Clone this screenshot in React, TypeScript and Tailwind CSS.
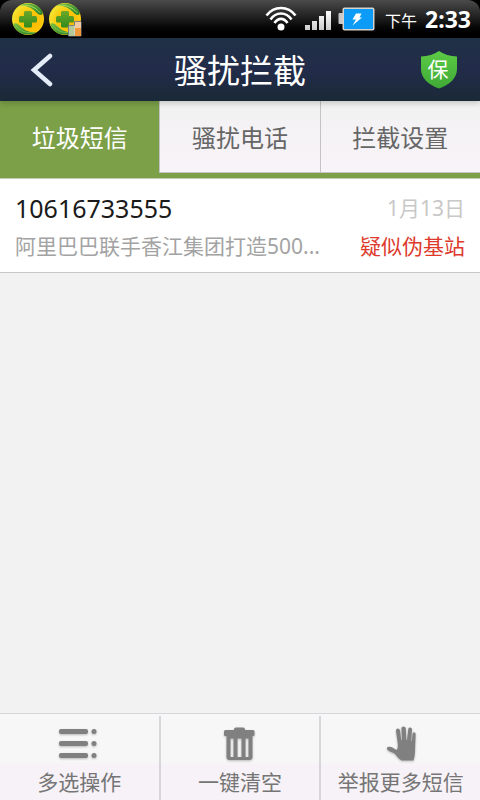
import type { ReactNode } from "react";

const tabs = ["垃圾短信", "骚扰电话", "拦截设置"];

const messages = [
  {
    sender: "10616733555",
    date: "1月13日",
    preview: "阿里巴巴联手香江集团打造500...",
    tag: "疑似伪基站",
  },
];

function ShieldOrb({ id, badge }: { id: string; badge?: boolean }) {
  return (
    <svg viewBox="0 0 36 36" className="h-9 w-9" aria-hidden="true">
      <defs>
        <radialGradient id={`${id}-orb`} cx="0.6" cy="0.6" r="0.6">
          <stop offset="0" stopColor="#ffb800" />
          <stop offset="0.55" stopColor="#fcc60a" />
          <stop offset="1" stopColor="#f3e22e" />
        </radialGradient>
        <linearGradient id={`${id}-leaf`} x1="0" y1="0" x2="1" y2="1">
          <stop offset="0" stopColor="#7cc142" />
          <stop offset="1" stopColor="#1d7a2a" />
        </linearGradient>
        <linearGradient id={`${id}-cross`} x1="0" y1="0" x2="0" y2="1">
          <stop offset="0" stopColor="#6fa82a" />
          <stop offset="1" stopColor="#2f8a1c" />
        </linearGradient>
      </defs>
      <circle cx="18" cy="18" r="16" fill={`url(#${id}-orb)`} />
      <path
        d="M10 4.500C16 1 25 2 29.500 7C32 9.500 33 12 32.500 13C31.500 14.500 29 14 27 12C23 7.500 18 4.500 10 4.500Z"
        fill={`url(#${id}-leaf)`}
      />
      <path d="M12 4.500C19 3.500 25 6 30.500 12" fill="none" stroke="#a9d95b" strokeWidth="1" />
      <path
        d="M26 31.500C20 35 11 34 6.500 29C4 26.500 3 24 3.500 23C4.500 21.500 7 22 9 24C13 28.500 18 31.500 26 31.500Z"
        fill={`url(#${id}-leaf)`}
      />
      <path d="M5.500 24.500C11 30.500 17 32.500 24 31.500" fill="none" stroke="#7cc142" strokeWidth="1" />
      <path
        d="M15.500 10h5a1.500 1.500 0 0 1 1.500 1.500v3.500h3.500a1.500 1.500 0 0 1 1.500 1.500v3.500a1.500 1.500 0 0 1-1.500 1.500h-3.500v3.500a1.500 1.500 0 0 1-1.500 1.500h-5a1.500 1.500 0 0 1-1.500-1.500v-3.500h-3.500a1.500 1.500 0 0 1-1.500-1.500v-3.500a1.500 1.500 0 0 1 1.500-1.500h3.500v-3.500a1.500 1.500 0 0 1 1.500-1.500Z"
        fill={`url(#${id}-cross)`}
      />
      {badge && (
        <>
          <path d="M21.500 35V24.500h6V20.500h6.500V35Z" fill="#f2e6d6" stroke="#7b7f83" />
          <path d="M22 25h5.500v10H22Z" fill="#b4c99c" />
          <path d="M28 27h6v8h-6Z" fill="#f09a3e" />
          <path d="M28 21h6v6h-6Z" fill="#f3c9a0" />
        </>
      )}
    </svg>
  );
}

function WifiIcon() {
  return (
    <svg viewBox="0 0 32 26" className="h-[26px] w-8" fill="none" stroke="#fff" aria-hidden="true">
      <path d="M1.500 9.500C9 -0.500 23 -0.500 30.500 9.500" strokeWidth="2.600" />
      <path d="M5.500 13.500C11 5.500 21 5.500 26.500 13.500" strokeWidth="2.600" />
      <path d="M9.500 17C13 11.500 19 11.500 22.500 17" strokeWidth="2.600" />
      <circle cx="16" cy="21" r="3.500" fill="#fff" stroke="none" />
    </svg>
  );
}

function SignalIcon() {
  return (
    <svg viewBox="0 0 26 20" className="h-5 w-[26px]" aria-hidden="true">
      <defs>
        <linearGradient id="signal" x1="0" y1="0" x2="0" y2="20" gradientUnits="userSpaceOnUse">
          <stop offset="0" stopColor="#fff" />
          <stop offset="1" stopColor="#c8c8c8" />
        </linearGradient>
      </defs>
      <path d="M0 14h5v5H0ZM7 10h5v9H7ZM14 5h5v14h-5ZM21 0h5v19h-5Z" fill="url(#signal)" />
    </svg>
  );
}

function BatteryIcon() {
  return (
    <svg viewBox="0 0 37 24" className="h-6 w-[37px]" aria-hidden="true">
      <path d="M5 6H1.500A1 1 0 0 0 .5 7v9a1 1 0 0 0 1 1H5Z" fill="#c9c9c9" />
      <rect x="4.500" y="0.500" width="32" height="23" rx="2" fill="#d8d2cc" />
      <rect x="6" y="2" width="29" height="20" fill="#0c9cf7" />
      <path d="M18 6.500h5.500L21.500 10.500H24L14.500 18.500L18 12.500H14.500Z" fill="#fff" />
    </svg>
  );
}

function ProtectIcon() {
  return (
    <svg viewBox="0 0 38 40" className="h-10 w-[38px]" role="img" aria-label="保护">
      <defs>
        <linearGradient id="protect" x1="0" y1="0" x2="0" y2="1">
          <stop offset="0" stopColor="#5ccb45" />
          <stop offset="1" stopColor="#3fa936" />
        </linearGradient>
      </defs>
      <path
        d="M19 1C14 4.500 8 6 1 6.500V19C1 28 8 34.500 19 38.500C30 34.500 37 28 37 19V6.500C30 6 24 4.500 19 1Z"
        fill="url(#protect)"
      />
      <text
        x="18"
        y="27"
        textAnchor="middle"
        className="fill-white font-['Noto_Sans_CJK_SC',sans-serif] text-[21px]"
      >
        保
      </text>
    </svg>
  );
}

function ListIcon() {
  return (
    <svg viewBox="0 0 40 36" className="h-9 w-10" aria-hidden="true">
      <g fill="#808080">
        <rect x="0" y="3" width="29" height="5" rx="2" />
        <rect x="0" y="15" width="29" height="5" rx="2" />
        <rect x="0" y="27" width="29" height="5" rx="2" />
        <circle cx="35" cy="5.500" r="2.500" />
        <circle cx="35" cy="17.500" r="2.500" />
        <circle cx="35" cy="29.500" r="2.500" />
      </g>
    </svg>
  );
}

function TrashIcon() {
  return (
    <svg viewBox="0 0 40 36" className="h-9 w-10" aria-hidden="true">
      <path
        fill="#808080"
        fillRule="evenodd"
        d="M16 1.500h7a2 2 0 0 1 2 2V4H33a1.500 1.500 0 0 1 1.500 1.500V9a1 1 0 0 1-1 1H32.500V31a3 3 0 0 1-3 3H9.500a3 3 0 0 1-3-3V10H5a1 1 0 0 1-1-1V5.500A1.500 1.500 0 0 1 5.500 4H14V3.500A2 2 0 0 1 16 1.500ZM10.500 12.500V31h3V12.500ZM17.500 12.500V31h4V12.500ZM25.500 12.500V31h3V12.500Z"
      />
    </svg>
  );
}

function HandIcon() {
  return (
    <svg viewBox="0 0 40 36" className="h-9 w-10" aria-hidden="true">
      <path
        fill="#808080"
        d="M6 22C6.300 20.500 9 20.300 11 21.300L15.500 24C17 23 17 20 16.600 16.500L15 5C14.800 1.800 18.400 1.500 19 4.500L20.300 14H21L20.400 2.500C20.400 -0.300 24.600 -0.300 24.800 2.500L25.400 14H26L27.200 3.500C27.600 0.700 31 1 31 3.800L30.300 15H30.900L31.600 8C32 5.500 34.700 5.800 34.600 8.500L34 26C33.800 30 33 32.500 32.500 34.500H20.500C17.500 32.500 15.500 30 13.500 27.500L8.500 25.300C6.800 24.500 5.800 23.500 6 22Z"
      />
    </svg>
  );
}

function StatusBar() {
  return (
    <div className="bg-black">
      <div className="flex h-[38px] items-center justify-between rounded-t-xl bg-linear-to-b from-[#4b4b4b] via-[#1c1c1c] via-50% to-black pr-[9px] pl-2.5">
        <div className="flex items-center gap-px">
          <ShieldOrb id="first" />
          <ShieldOrb id="second" badge />
        </div>
        <div className="flex items-center text-white">
          <WifiIcon />
          <div className="ml-2 pt-1">
            <SignalIcon />
          </div>
          <div className="ml-[7px]">
            <BatteryIcon />
          </div>
          <span className="ml-2.5 pt-1 text-base">下午</span>
          <span className="ml-2 text-[23px] leading-8 font-bold">2:33</span>
        </div>
      </div>
    </div>
  );
}

function Action({ icon, label }: { icon: ReactNode; label: string }) {
  return (
    <button
      type="button"
      className="flex flex-1 flex-col items-center border-r-2 border-[#d9d6db] pt-2.5 pb-0.5 text-[21px] leading-8 whitespace-nowrap text-[#757575] last:border-r-0"
    >
      <span className="drop-shadow-[0_1px_1px_rgba(0,0,0,0.25)]">{icon}</span>
      <span className="mt-1">{label}</span>
    </button>
  );
}

export default function App() {
  return (
    <div className="flex min-h-screen flex-col bg-[#f2f2f2] font-['Noto_Sans','Noto_Sans_CJK_SC',sans-serif]">
      <StatusBar />

      <header className="relative z-10 grid h-[63px] grid-cols-[1fr_auto_1fr] items-center bg-linear-to-b from-[#1f3045] via-[#222c4a] to-[#1a2937] pr-[22px] pl-[30px] shadow-[0_2px_6px_rgba(0,0,0,0.2)]">
        <button type="button" aria-label="返回" className="w-10">
          <svg viewBox="0 0 24 34" className="h-[34px] w-6" aria-hidden="true">
            <path
              d="M20 3L4 17L20 31"
              fill="none"
              stroke="#e4ecf8"
              strokeWidth="4.500"
              strokeLinecap="round"
            />
          </svg>
        </button>
        <h1 className="-ml-2 pt-0.5 text-[33px] leading-10 text-white">骚扰拦截</h1>
        <button type="button" className="justify-self-end">
          <ProtectIcon />
        </button>
      </header>

      <nav className="flex border-b border-[#c4c9b8] bg-[#7ba048] text-2xl">
        {tabs.map((tab, idx) => (
          <button
            key={tab}
            type="button"
            aria-current={idx === 0 ? "page" : undefined}
            className={
              idx === 0
                ? "flex-1 pb-[3px] text-white"
                : "mb-[5px] h-[72px] flex-1 border-b border-l border-[#c3c3c3] bg-linear-to-b from-[#f2f2f2] to-[#f8f3f8] pt-0.5 text-[#666]"
            }
          >
            {tab}
          </button>
        ))}
      </nav>

      <main className="flex-1">
        <ul>
          {messages.map((msg) => (
            <li
              key={msg.sender}
              className="border-b border-[#c8c8c8] bg-white px-[15px] pt-[9px] pb-2"
            >
              <div className="flex items-center justify-between leading-10">
                <span className="text-[25px] text-[#1a1a1a]">{msg.sender}</span>
                <span className="text-[21px] text-[#c8c8c8]">{msg.date}</span>
              </div>
              <div className="flex items-center justify-between text-[21px] leading-9">
                <span className="truncate text-[#a3a3a3]">{msg.preview}</span>
                <span className="shrink-0 text-[#dd3a2c]">{msg.tag}</span>
              </div>
            </li>
          ))}
        </ul>
      </main>

      <footer className="flex border-t border-[#d9d6db] bg-linear-to-b from-[#f7f7f7] from-55% to-[#f7f2f7] to-60% pt-0.5">
        <Action icon={<ListIcon />} label="多选操作" />
        <Action icon={<TrashIcon />} label="一键清空" />
        <Action icon={<HandIcon />} label="举报更多短信" />
      </footer>
    </div>
  );
}
